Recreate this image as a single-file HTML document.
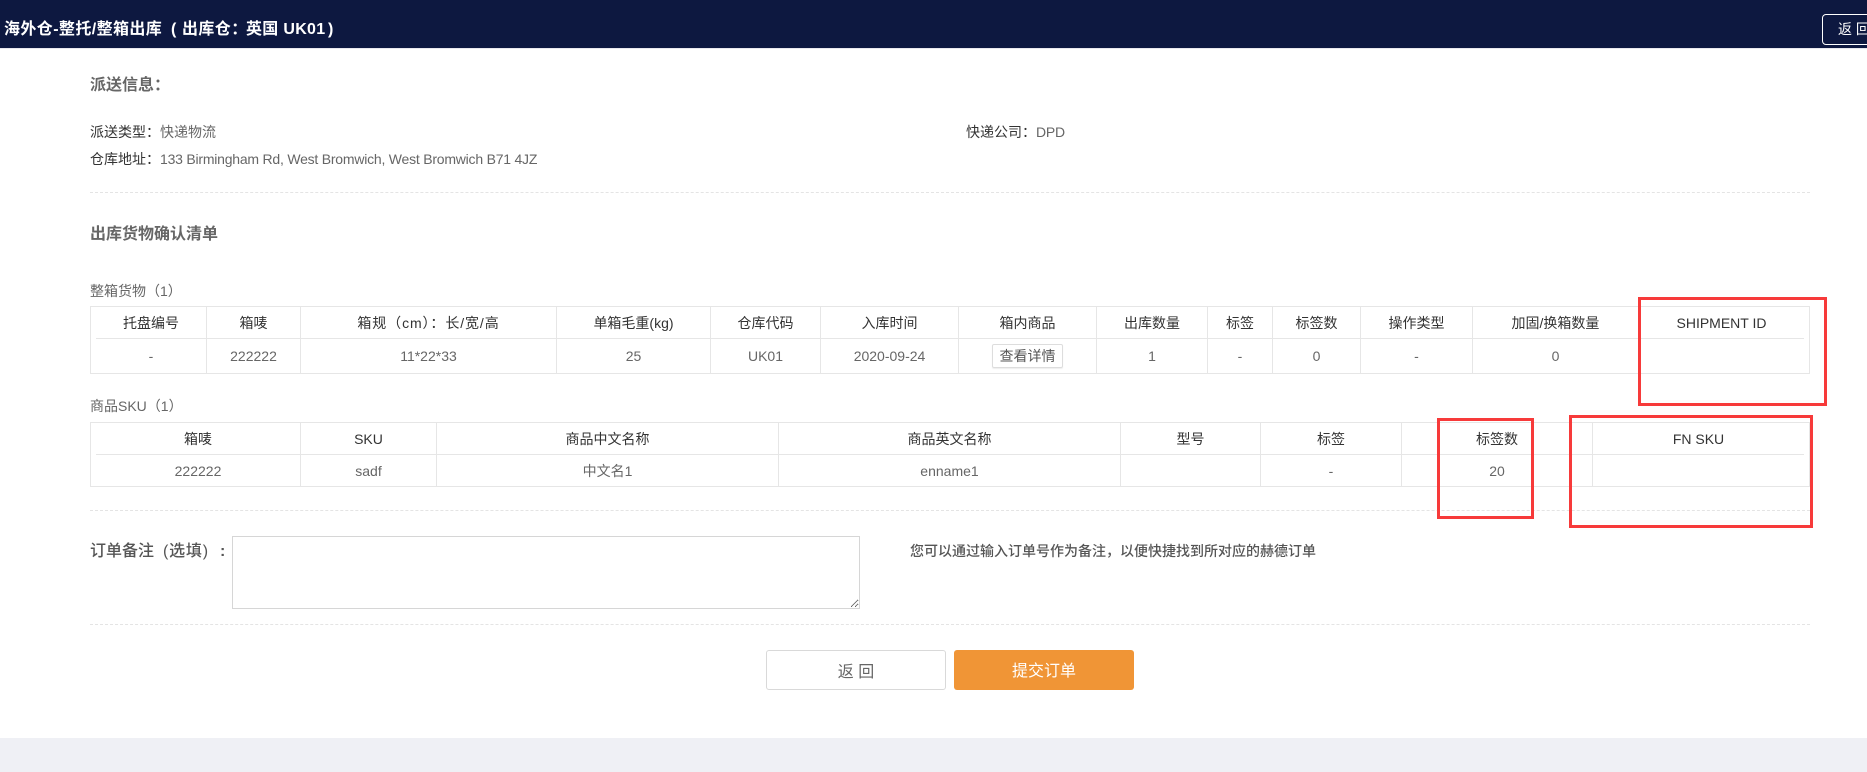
<!DOCTYPE html>
<html lang="zh-CN">
<head>
<meta charset="utf-8">
<title>海外仓-整托/整箱出库</title>
<style>
html,body{margin:0;padding:0;width:1867px;height:772px;overflow:hidden;background:#fff;}
body{position:relative;font-family:"Liberation Sans","Noto Sans CJK SC",sans-serif;font-size:14px;color:#666;}
.a{position:absolute;white-space:nowrap;line-height:20px;}
.hdr{position:absolute;left:0;top:0;width:1867px;height:48px;background:#0d1840;border-bottom:1px solid #e8e8ee;}
.title{top:20px;color:#fff;font-size:16px;font-weight:bold;}
.topbtn{position:absolute;left:1822px;top:14px;width:70px;height:31px;box-sizing:border-box;border:1px solid #fff;border-radius:4px;color:#fff;line-height:29px;padding-left:15px;font-size:14px;white-space:nowrap;}
.h2{font-size:16px;color:#666;left:90px;font-weight:bold;}
.l{color:#333;}
.dash{position:absolute;left:90px;width:1720px;height:0;border-top:1px dashed #e4e4e4;}
.box{position:absolute;left:90px;width:1720px;box-sizing:border-box;border:1px solid #e6e6e6;}
table{position:absolute;left:5px;top:0;width:1708px;border-collapse:separate;border-spacing:0;table-layout:fixed;}
th,td{padding:0;text-align:center;font-size:14px;overflow:hidden;white-space:nowrap;}
th{font-weight:normal;color:#333;border-bottom:1px solid #e6e6e6;}
td{color:#666;}
th+th,td+td{border-left:1px solid #e6e6e6;}
.t1 th{height:31px;}.t1 td{height:34px;}
.t2 th{height:31px;}.t2 td{height:31px;}
.vb{display:inline-block;box-sizing:border-box;width:71px;height:24px;line-height:22px;border:1px solid #ddd;border-radius:2px;color:#555;box-shadow:0 1px 1px #eee;}
.red{position:absolute;box-sizing:border-box;border:3px solid #f73a3a;}
textarea{position:absolute;left:232px;top:536px;width:628px;height:73px;box-sizing:border-box;border:1px solid #d6d6d6;margin:0;padding:2px;background:#fff;outline:none;display:block;}
.btn{position:absolute;top:650px;height:40px;box-sizing:border-box;border-radius:3px;text-align:center;font-size:16px;white-space:nowrap;}
.foot{position:absolute;left:0;top:738px;width:1867px;height:34px;background:#eff0f5;}
.rm{font-size:16px;color:#555;top:542px;font-weight:500;}
</style>
</head>
<body>
<div class="hdr"></div>
<div class="a title" style="left:4px;letter-spacing:.4px;">海外仓-整托/整箱出库</div>
<div class="a title" style="left:171px;">(</div>
<div class="a title" style="left:182px;letter-spacing:.4px;">出库仓：</div>
<div class="a title" style="left:246px;letter-spacing:.3px;">英国 UK01</div>
<div class="a title" style="left:328px;">)</div>
<div class="topbtn">返 回</div>

<div class="a h2" style="top:76px;">派送信息：</div>
<div class="a" style="left:90px;top:122px;"><span class="l">派送类型：</span>快递物流</div>
<div class="a" style="left:966px;top:122px;"><span class="l">快递公司：</span><span style="letter-spacing:-.2px">DPD</span></div>
<div class="a" style="left:90px;top:149px;"><span class="l">仓库地址：</span><span style="letter-spacing:-.22px">133 Birmingham Rd, West Bromwich, West Bromwich B71 4JZ</span></div>
<div class="dash" style="top:192px;"></div>

<div class="a h2" style="top:225px;">出库货物确认清单</div>
<div class="a" style="left:90px;top:281px;">整箱货物（1）</div>
<div class="box" style="top:306px;height:68px;">
<table class="t1">
<colgroup><col style="width:110px"><col style="width:94px"><col style="width:256px"><col style="width:154px"><col style="width:110px"><col style="width:138px"><col style="width:138px"><col style="width:111px"><col style="width:65px"><col style="width:88px"><col style="width:112px"><col style="width:166px"><col style="width:166px"></colgroup>
<tr><th>托盘编号</th><th>箱唛</th><th style="letter-spacing:.9px">箱规（cm）：长/宽/高</th><th>单箱毛重(kg)</th><th>仓库代码</th><th>入库时间</th><th>箱内商品</th><th>出库数量</th><th>标签</th><th>标签数</th><th>操作类型</th><th>加固/换箱数量</th><th>SHIPMENT ID</th></tr>
<tr><td>-</td><td>222222</td><td>11*22*33</td><td>25</td><td>UK01</td><td>2020-09-24</td><td><span class="vb">查看详情</span></td><td>1</td><td>-</td><td>0</td><td>-</td><td>0</td><td></td></tr>
</table>
</div>

<div class="a" style="left:90px;top:396px;">商品SKU（1）</div>
<div class="box" style="top:422px;height:65px;">
<table class="t2">
<colgroup><col style="width:204px"><col style="width:136px"><col style="width:342px"><col style="width:342px"><col style="width:140px"><col style="width:141px"><col style="width:191px"><col style="width:212px"></colgroup>
<tr><th>箱唛</th><th>SKU</th><th>商品中文名称</th><th>商品英文名称</th><th>型号</th><th>标签</th><th>标签数</th><th>FN SKU</th></tr>
<tr><td>222222</td><td>sadf</td><td>中文名1</td><td>enname1</td><td></td><td>-</td><td>20</td><td></td></tr>
</table>
</div>

<div class="dash" style="top:510px;"></div>
<div class="a rm" style="left:90px;">订单备注</div>
<div class="a rm" style="left:163px;letter-spacing:.8px;">(选填)</div>
<div class="a rm" style="left:220px;font-weight:bold;">:</div>
<textarea></textarea>
<div class="a" style="left:910px;top:541px;color:#555;font-weight:500;">您可以通过输入订单号作为备注，以便快捷找到所对应的赫德订单</div>
<div class="dash" style="top:624px;"></div>

<div class="btn" style="left:766px;width:180px;border:1px solid #d9d9d9;color:#666;line-height:43px;background:#fff;">返 回</div>
<div class="btn" style="left:954px;width:180px;background:#f09536;color:#fff;line-height:44px;">提交订单</div>

<div class="foot"></div>

<div class="red" style="left:1638px;top:297px;width:189px;height:109px;"></div>
<div class="red" style="left:1437px;top:418px;width:97px;height:101px;"></div>
<div class="red" style="left:1569px;top:415px;width:244px;height:113px;"></div>
</body>
</html>
